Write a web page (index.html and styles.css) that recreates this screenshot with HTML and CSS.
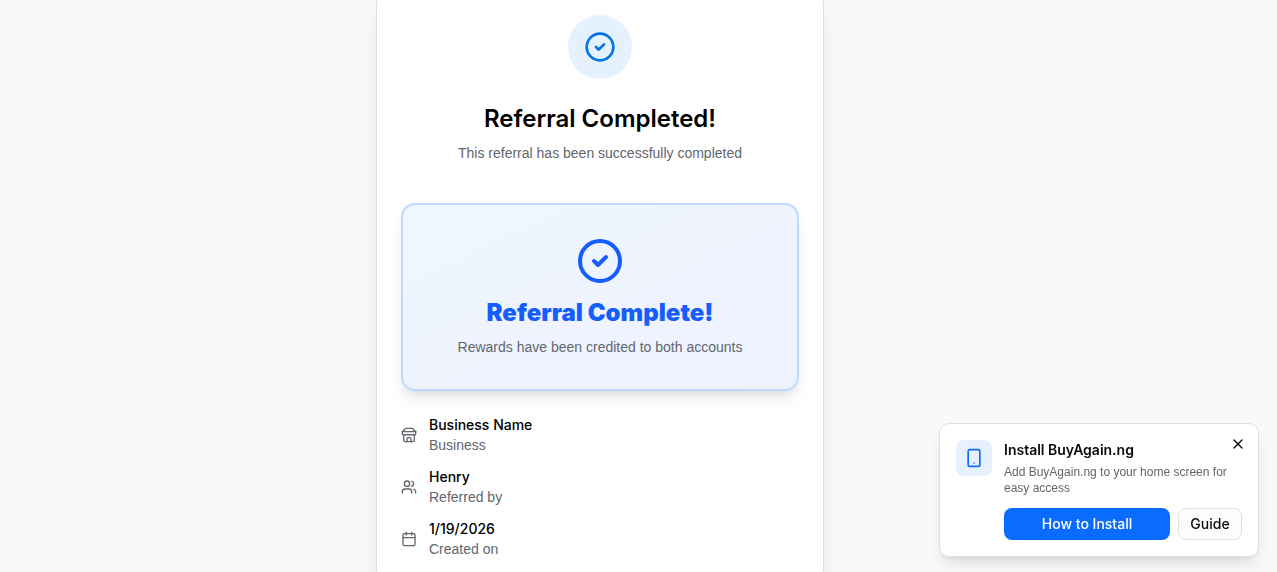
FILE: index.html
```html
<!DOCTYPE html>
<html lang="en">
<head>
<meta charset="utf-8">
<meta name="viewport" content="width=device-width, initial-scale=1">
<title>Referral Completed</title>
<link rel="stylesheet" href="styles.css">
</head>
<body>
<main class="page">
  <section class="card">
    <header class="card-header">
      <div class="status-badge">
        <svg class="icon" width="32" height="32" viewBox="0 0 24 24"><circle cx="12" cy="12" r="10"/><path d="m9 12 2 2 4-4"/></svg>
      </div>
      <h1 class="title">Referral Completed!</h1>
      <p class="subtitle">This referral has been successfully completed</p>
    </header>
    <div class="reward">
      <svg class="icon reward-icon" width="48" height="48" viewBox="0 0 24 24"><circle cx="12" cy="12" r="10"/><path d="m9 12 2 2 4-4"/></svg>
      <h2 class="reward-title">Referral Complete!</h2>
      <p class="reward-text">Rewards have been credited to both accounts</p>
    </div>
    <ul class="details">
      <li class="detail">
        <svg class="icon" width="16" height="16" viewBox="0 0 24 24"><path d="m2 7 4.41-4.41A2 2 0 0 1 7.83 2h8.34a2 2 0 0 1 1.42.59L22 7"/><path d="M4 12v8a2 2 0 0 0 2 2h12a2 2 0 0 0 2-2v-8"/><path d="M15 22v-4a2 2 0 0 0-2-2h-2a2 2 0 0 0-2 2v4"/><path d="M2 7h20"/><path d="M22 7v3a2 2 0 0 1-2 2a2.7 2.7 0 0 1-1.59-.63.7.7 0 0 0-.82 0A2.7 2.7 0 0 1 16 12a2.7 2.7 0 0 1-1.59-.63.7.7 0 0 0-.82 0A2.7 2.7 0 0 1 12 12a2.7 2.7 0 0 1-1.59-.63.7.7 0 0 0-.82 0A2.7 2.7 0 0 1 8 12a2.7 2.7 0 0 1-1.59-.63.7.7 0 0 0-.82 0A2.7 2.7 0 0 1 4 12a2 2 0 0 1-2-2V7"/></svg>
        <div><p class="detail-value">Business Name</p><p class="detail-label">Business</p></div>
      </li>
      <li class="detail">
        <svg class="icon" width="16" height="16" viewBox="0 0 24 24"><path d="M16 21v-2a4 4 0 0 0-4-4H6a4 4 0 0 0-4 4v2"/><circle cx="9" cy="7" r="4"/><path d="M22 21v-2a4 4 0 0 0-3-3.87"/><path d="M16 3.13a4 4 0 0 1 0 7.75"/></svg>
        <div><p class="detail-value">Henry</p><p class="detail-label">Referred by</p></div>
      </li>
      <li class="detail">
        <svg class="icon" width="16" height="16" viewBox="0 0 24 24"><path d="M8 2v4"/><path d="M16 2v4"/><rect width="18" height="18" x="3" y="4" rx="2"/><path d="M3 10h18"/></svg>
        <div><p class="detail-value">1/19/2026</p><p class="detail-label">Created on</p></div>
      </li>
    </ul>
  </section>
</main>
<aside class="install" aria-label="Install app">
  <div class="install-badge">
    <svg class="icon" width="20" height="20" viewBox="0 0 24 24"><rect width="14" height="20" x="5" y="2" rx="2"/><path d="M12 18h.01"/></svg>
  </div>
  <div class="install-body">
    <h3 class="install-title">Install BuyAgain.ng</h3>
    <p class="install-text">Add BuyAgain.ng to your home screen for easy access</p>
    <div class="install-actions">
      <button class="button button-primary" type="button">How to Install</button>
      <button class="button button-outline" type="button">Guide</button>
    </div>
  </div>
  <button class="close" type="button" aria-label="Close">
    <svg class="icon" width="16" height="16" viewBox="0 0 24 24"><path d="M18 6 6 18"/><path d="m6 6 12 12"/></svg>
  </button>
</aside>
</body>
</html>
```
FILE: styles.css
```css
*,
*::before,
*::after {
  box-sizing: border-box;
}

body,
h1,
h2,
h3,
p,
ul {
  margin: 0;
  padding: 0;
}

body {
  height: 100vh;
  overflow: hidden;
  background: #f8f9fb;
  color: #0a0a0a;
  font-family: Inter, "Liberation Sans", sans-serif;
  font-size: 14px;
  line-height: 20px;
}

.icon {
  flex: none;
  fill: none;
  stroke: currentColor;
  stroke-width: 2;
  stroke-linecap: round;
  stroke-linejoin: round;
}

.page {
  display: flex;
  justify-content: center;
  padding-right: 77px;
}

.card {
  flex: 0 1 448px;
  margin-top: -10px;
  padding: 24px;
  border: 1px solid #dddfe4;
  border-radius: 14px;
  background: #fff;
  box-shadow: 0 20px 25px -5px rgb(0 0 0 / 0.1), 0 8px 10px -6px rgb(0 0 0 / 0.1);
}

.card-header {
  display: flex;
  flex-direction: column;
  align-items: center;
  padding-bottom: 40px;
  text-align: center;
}

.status-badge {
  display: flex;
  align-items: center;
  justify-content: center;
  width: 64px;
  height: 64px;
  margin-bottom: 24px;
  border-radius: 50%;
  background: #e5f1fe;
  color: #0073e6;
}

.title {
  margin-bottom: 8px;
  color: #000;
  font-size: 24px;
  font-weight: 600;
  line-height: 32px;
}

.subtitle,
.reward-text,
.detail-label,
.install-text {
  color: #62666d;
  font-family: "Liberation Sans", Arial, sans-serif;
}

.reward {
  display: flex;
  flex-direction: column;
  align-items: center;
  padding: 32px;
  border: 2px solid #bedbff;
  border-radius: 14px;
  background: linear-gradient(to bottom right, #eff6ff, #eef2ff);
  box-shadow: 0 10px 15px -3px rgb(0 0 0 / 0.1), 0 4px 6px -4px rgb(0 0 0 / 0.1);
  text-align: center;
}

.reward-icon {
  margin-bottom: 12px;
  color: #155dfc;
}

.reward-title {
  margin-bottom: 8px;
  color: #155dfc;
  font-size: 24px;
  font-weight: 900;
  line-height: 32px;
}

.details {
  display: flex;
  flex-direction: column;
  gap: 12px;
  margin-top: 24px;
  list-style: none;
}

.detail {
  display: flex;
  align-items: center;
  gap: 12px;
  color: #62666d;
}

.detail-value {
  color: #000;
  font-weight: 500;
}

.install {
  position: fixed;
  right: 18px;
  bottom: 15px;
  display: flex;
  gap: 12px;
  width: 320px;
  padding: 16px;
  border: 1px solid #dddfe4;
  border-radius: 10px;
  background: #fff;
  box-shadow: 0 10px 15px -3px rgb(0 0 0 / 0.1), 0 4px 6px -4px rgb(0 0 0 / 0.1);
}

.install-badge {
  display: flex;
  flex: none;
  align-items: center;
  justify-content: center;
  width: 36px;
  height: 36px;
  border-radius: 8px;
  background: #e6f0ff;
  color: #0a6cff;
}

.install-body {
  flex: 1;
}

.install-title {
  margin-bottom: 4px;
  font-size: 14px;
  font-weight: 600;
}

.install-text {
  margin-bottom: 12px;
  font-size: 12px;
  line-height: 16px;
}

.install-actions {
  display: flex;
  gap: 8px;
}

.button {
  height: 32px;
  padding: 0 12px;
  border: 1px solid transparent;
  border-radius: 8px;
  font: inherit;
  font-weight: 500;
}

.button-primary {
  flex: 1;
  background: #0a6cff;
  color: #fff;
}

.button-outline {
  flex: 0 0 64px;
  padding: 0;
  border-color: #dddfe4;
  background: #fcfcfc;
  color: #0a0a0a;
}

.close {
  position: absolute;
  top: 12px;
  right: 12px;
  display: flex;
  padding: 0;
  border: 0;
  background: none;
  color: #0a0a0a;
}
```
